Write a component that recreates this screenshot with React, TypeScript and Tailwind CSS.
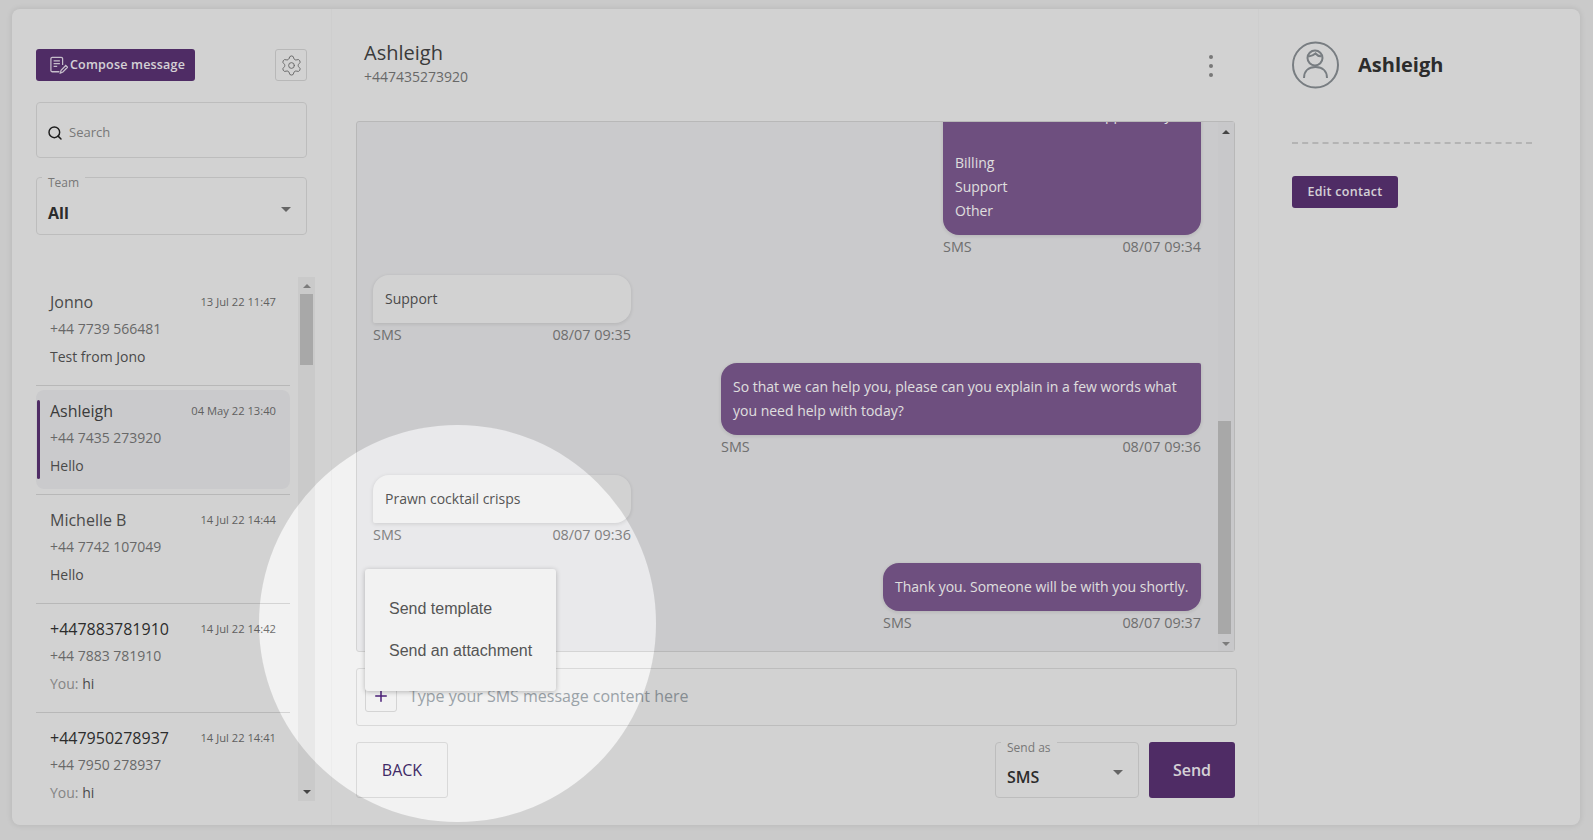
import { Plus, Search, Settings } from "lucide-react";

const PURPLE = "bg-[#5b3374]";

type Contact = {
  name: string;
  time: string;
  phone: string;
  preview: string;
  you?: boolean;
  active?: boolean;
  dark?: boolean;
};

const contacts: Contact[] = [
  { name: "Jonno", time: "13 Jul 22 11:47", phone: "+44 7739 566481", preview: "Test from Jono" },
  { name: "Ashleigh", time: "04 May 22 13:40", phone: "+44 7435 273920", preview: "Hello", active: true },
  { name: "Michelle B", time: "14 Jul 22 14:44", phone: "+44 7742 107049", preview: "Hello" },
  { name: "+447883781910", time: "14 Jul 22 14:42", phone: "+44 7883 781910", preview: "hi", you: true, dark: true },
  { name: "+447950278937", time: "14 Jul 22 14:41", phone: "+44 7950 278937", preview: "hi", you: true, dark: true },
];

const Caret = () => (
  <div className="h-0 w-0 border-x-[5px] border-t-[5px] border-x-transparent border-t-[#757575]" />
);

const ComposeIcon = () => (
  <svg viewBox="0 0 20 20" className="h-[18px] w-[18px] shrink-0" fill="none" stroke="#e4dbe9" strokeWidth="1.4">
    <path d="M10.500 17.500H2.500A1.500 1.500 0 0 1 1 16V3A1.500 1.500 0 0 1 2.500 1.500h10A1.500 1.500 0 0 1 14 3v7" />
    <path d="M4 5.500h7M4 8.500h7M4 11.500h4" />
    <path d="M11.500 19l0.800-3.200 5.200-5.300 2 2-5.200 5.300z" />
  </svg>
);

const AvatarIcon = () => (
  <svg viewBox="0 0 48 48" className="h-12 w-12" fill="none" stroke="#8a9095" strokeWidth="2">
    <circle cx="23.500" cy="24" r="22.500" />
    <circle cx="23" cy="17" r="7.500" />
    <path d="M15.800 15c4 0.800 6-1 7.700-2.500 1.500 1.800 3.800 3 6.200 2.700" />
    <path d="M12 37c0-7 4.500-11 11.500-11S35 30 35 37" />
  </svg>
);

const ScrollbarArrow = ({ up, dark }: { up?: boolean; dark?: boolean }) => {
  const colour = dark ? "border-[#505050]" : "border-[#8f8f8f]";
  return (
    <div className="flex h-[14px] items-center justify-center">
      <div
        className={
          up
            ? `h-0 w-0 border-x-4 border-b-4 border-x-transparent ${colour}`
            : `h-0 w-0 border-x-4 border-t-4 border-x-transparent ${colour}`
        }
      />
    </div>
  );
};

const ContactRow = ({ contact }: { contact: Contact }) => (
  <div className="h-[109px] shrink-0 border-b border-[#d4d4d4] pb-[5px] pt-[4px]">
    <div className={`relative h-[99px] rounded-lg pl-[14px] pr-[14px] pt-[9px] ${contact.active ? "bg-[#e9e9eb]" : ""}`}>
      {contact.active && <div className={`absolute left-[1px] top-[10px] h-[79px] w-[3px] rounded-sm ${PURPLE}`} />}
      <div className="flex h-[24px] items-center justify-between">
        <span className={`text-base ${contact.active ? "font-medium text-[#444]" : contact.dark ? "text-[#333]" : "text-[#555]"}`}>
          {contact.name}
        </span>
        <span className="text-[11.2px] text-[#6f6f6f]">{contact.time}</span>
      </div>
      <div className="mt-[3px] text-sm leading-[24px] text-[#787878]">{contact.phone}</div>
      <div className="mt-[4px] text-sm leading-[24px] text-[#555]">
        {contact.you && <span className="text-[#999]">You: </span>}
        {contact.preview}
      </div>
    </div>
  </div>
);

const Meta = ({ time }: { time: string }) => (
  <div className="mt-[2px] flex justify-between text-[14.4px] leading-[19px] text-[#808080]">
    <span>SMS</span>
    <span>{time}</span>
  </div>
);

const Inbound = ({ text, time }: { text: string; time: string }) => (
  <div className="w-[258px] self-start">
    <div className="rounded-2xl rounded-bl-[2px] bg-[#f2f2f2] px-3 py-3 text-sm leading-[24px] text-[#555] shadow-[0_1px_4px_rgba(0,0,0,0.12)]">
      {text}
    </div>
    <Meta time={time} />
  </div>
);

const Outbound = ({ lines, time, width }: { lines: string[]; time: string; width: string }) => (
  <div className={`${width} self-end`}>
    <div className="rounded-2xl rounded-tr-[2px] bg-[#7f5b92] px-3 py-3 text-sm leading-[24px] text-white shadow-[0_1px_4px_rgba(0,0,0,0.12)]">
      {lines.map((line, i) => (
        <div key={i} className="min-h-[24px] whitespace-nowrap">
          {line}
        </div>
      ))}
    </div>
    <Meta time={time} />
  </div>
);

const Conversation = () => (
  <div className="flex h-[531px] rounded-[3px] border border-[#d4d4d4] bg-[#e9e9eb]">
    <div className="flex min-w-0 flex-1 flex-col justify-end gap-[19px] overflow-hidden pb-[19px] pl-4 pr-[17px]">
      <Outbound
        width="w-[258px]"
        time="08/07 09:34"
        lines={["Now choose one that applies to you", "", "Billing", "Support", "Other"]}
      />
      <Inbound text="Support" time="08/07 09:35" />
      <Outbound
        width="w-[480px]"
        time="08/07 09:36"
        lines={["So that we can help you, please can you explain in a few words what", "you need help with today?"]}
      />
      <Inbound text="Prawn cocktail crisps" time="08/07 09:36" />
      <Outbound width="w-[318px]" time="08/07 09:37" lines={["Thank you. Someone will be with you shortly."]} />
    </div>
    <div className="flex w-[16px] shrink-0 flex-col bg-[#e6e6e8] pt-[3px]">
      <ScrollbarArrow up dark />
      <div className="flex-1 pb-[3px] pr-[3px] pt-[282px]">
        <div className="h-full bg-[#c1c1c1]" />
      </div>
      <ScrollbarArrow />
    </div>
  </div>
);

const Sidebar = () => (
  <aside className="flex w-[320px] shrink-0 flex-col border-r border-[#ededed] pl-6 pr-6 pt-10">
    <div className="flex items-center justify-between">
      <button className={`flex h-[32px] w-[159px] items-center gap-[2px] rounded-[3px] pl-[14px] text-[12.5px] font-semibold tracking-[0.2px] text-[#f4f0f6] ${PURPLE}`}>
        <ComposeIcon />
        Compose message
      </button>
      <button className="flex h-[32px] w-[32px] items-center justify-center rounded-[3px] border border-[#d4d4d4]">
        <Settings size={23} strokeWidth={1} className="text-[#777]" />
      </button>
    </div>
    <div className="mt-[21px] flex h-[56px] items-center gap-[6px] rounded-[4px] border border-[#d9d9d9] pl-[10px] pt-[6px]">
      <Search size={16} strokeWidth={2.2} className="text-[#222]" />
      <span className="text-[13px] text-[#8a8a8a]">Search</span>
    </div>
    <div className="relative mt-[19px] flex h-[58px] items-end justify-between rounded-[4px] border border-[#d9d9d9] px-[11px] pb-[9px]">
      <span className="absolute -top-[3px] left-[5px] bg-[#f2f2f2] px-[6px] text-xs leading-[16px] text-[#8a8a8a]">Team</span>
      <span className="text-base font-bold leading-[24px] text-[#333]">All</span>
      <div className="mb-[13px] mr-[4px]">
        <Caret />
      </div>
    </div>
    <div className="-mr-2 mt-[42px] flex h-[524px] overflow-hidden">
      <div className="flex w-[254px] shrink-0 flex-col overflow-hidden">
        {contacts.map((c) => (
          <ContactRow key={c.name} contact={c} />
        ))}
      </div>
      <div className="ml-2 flex w-[17px] shrink-0 flex-col bg-[#e8e8e8] pb-[2px] pt-[2px]">
        <ScrollbarArrow up />
        <div className="flex-1 px-[2px] pt-[1px]">
          <div className="h-[71px] bg-[#c1c1c1]" />
        </div>
        <ScrollbarArrow dark />
      </div>
    </div>
  </aside>
);

const ChatPanel = () => (
  <main className="flex w-[927px] shrink-0 flex-col border-r border-[#ededed] pl-6 pr-[23px]">
    <div className="flex h-[112px] items-start justify-between pl-2 pr-[22px] pt-[29px]">
      <div>
        <div className="text-xl leading-[30px] text-[#444]">Ashleigh</div>
        <div className="-mt-px text-sm leading-[20px] text-[#787878]">+447435273920</div>
      </div>
      <div className="mt-[17px] flex flex-col gap-[5px]">
        <div className="h-[4px] w-[4px] rounded-full bg-[#8a8a8a]" />
        <div className="h-[4px] w-[4px] rounded-full bg-[#8a8a8a]" />
        <div className="h-[4px] w-[4px] rounded-full bg-[#8a8a8a]" />
      </div>
    </div>
    <Conversation />
    <div className="mt-4 flex h-[58px] w-[881px] items-center gap-3 rounded-[3px] border border-[#d9d9d9] pb-[2px] pl-2">
      <div className="flex h-[32px] w-[32px] items-center justify-center rounded-[3px] border border-[#d4d4d4]">
        <Plus size={18} strokeWidth={2} className="text-[#4b1f78]" />
      </div>
      <span className="text-base text-[#9aa2a8]">Type your SMS message content here</span>
    </div>
    <div className="mt-4 flex h-[56px] items-stretch justify-between">
      <button className="w-[92px] rounded-[3px] border border-[#d9d9d9] text-base text-[#3f2a66]">BACK</button>
      <div className="flex gap-[10px]">
        <div className="relative flex w-[144px] items-end justify-between rounded-[4px] border border-[#d9d9d9] px-[11px] pb-[8px]">
          <span className="absolute -top-[3px] left-[5px] bg-[#f2f2f2] px-[6px] text-xs leading-[16px] text-[#8a8a8a]">Send as</span>
          <span className="text-base font-semibold leading-[24px] text-[#333]">SMS</span>
          <div className="mb-[14px] mr-[4px]">
            <Caret />
          </div>
        </div>
        <button className={`w-[86px] rounded-[3px] text-base font-semibold text-[#f4f0f6] ${PURPLE}`}>Send</button>
      </div>
    </div>
  </main>
);

const ContactPanel = () => (
  <aside className="flex-1 pl-[33px] pr-[48px] pt-8">
    <div className="flex items-center gap-[18px]">
      <AvatarIcon />
      <span className="text-xl font-bold text-[#333]">Ashleigh</span>
    </div>
    <div className="mt-[53px] border-t-2 border-dashed border-[#cfcfcf]" />
    <button className={`mt-[32px] h-[32px] w-[106px] rounded-[3px] text-[12.5px] font-semibold tracking-[0.3px] text-[#f4f0f6] ${PURPLE}`}>
      Edit contact
    </button>
  </aside>
);

export default function App() {
  return (
    <div className="relative h-[840px] w-[1593px] overflow-hidden bg-[#e8e8e8] px-3 py-[9px] font-['Open_Sans',sans-serif]">
      <div className="flex h-[816px] w-[1568px] overflow-hidden rounded-lg bg-[#f2f2f2] shadow-[0_0_6px_rgba(0,0,0,0.1)]">
        <Sidebar />
        <ChatPanel />
        <ContactPanel />
      </div>

      {/* tour spotlight, dims everything outside the circle */}
      <div className="absolute left-[259px] top-[425px] h-[397px] w-[397px] rounded-full shadow-[0_0_0_1600px_rgba(0,0,0,0.13)]" />

      <div className="absolute left-[365px] top-[569px] flex h-[122px] w-[191px] flex-col justify-center gap-[18px] rounded-[3px] bg-[#f2f2f2] pl-6 font-['Liberation_Sans',sans-serif] text-base leading-[24px] text-[#555] shadow-[0_1px_5px_rgba(0,0,0,0.25)]">
        <div>Send template</div>
        <div>Send an attachment</div>
      </div>
    </div>
  );
}
